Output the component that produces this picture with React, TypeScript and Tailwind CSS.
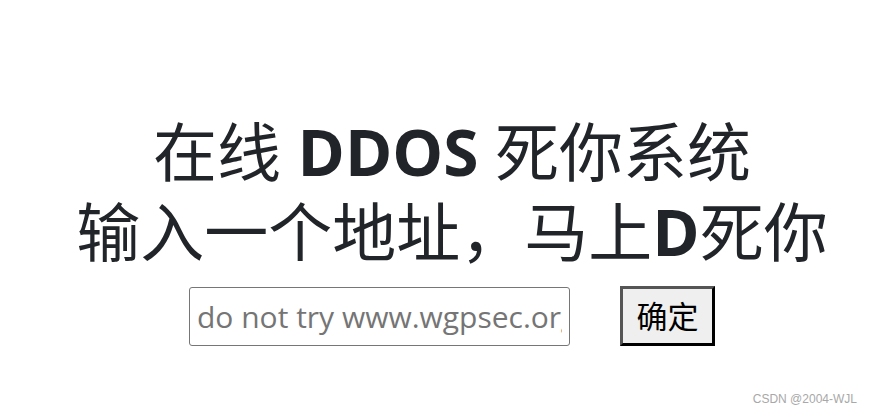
export default function App() {
  return (
    <div
      className="relative w-[871px] h-[417px] bg-white overflow-hidden pl-[33px]"
      style={{ fontFamily: '"Open Sans", "Noto Sans CJK SC", sans-serif' }}
    >
      <div className="flex flex-col items-center pt-[112px]">
        <h1 className="text-[64px] leading-[80px] font-normal text-[#212529] text-center">
          在线 <b className="font-bold">DDOS</b> 死你系统
          <br />
          输入一个地址，马上<b className="font-bold">D</b>死你
        </h1>
        <form className="flex items-center gap-[50px] mt-[14px]" onSubmit={(e) => e.preventDefault()}>
          <input
            type="text"
            placeholder="do not try www.wgpsec.org"
            className="w-[381px] h-[59px] border border-[#767676] rounded-[3px] px-[7px] text-[30px] text-black placeholder:text-[#757575] outline-none"
          />
          <button
            type="submit"
            className="w-[95px] h-[60px] bg-[#efefef] border-[3px] border-t-[#555] border-l-[#555] border-r-black border-b-black text-[31px] leading-none text-black"
          >
            确定
          </button>
        </form>
      </div>
      <span className="absolute right-[14px] bottom-[9px] text-[12px] text-[#a8a8a8]" style={{ fontFamily: '"Liberation Sans", sans-serif' }}>
        CSDN @2004-WJL
      </span>
    </div>
  );
}
